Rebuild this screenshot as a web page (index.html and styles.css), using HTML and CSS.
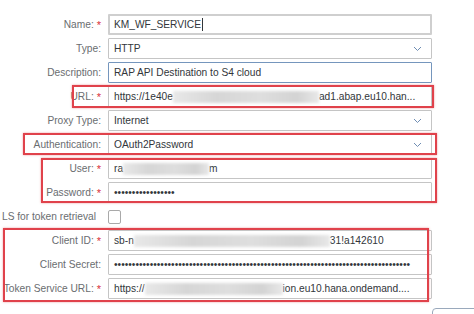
FILE: index.html
```html
<!DOCTYPE html>
<html lang="en">
<head>
    <meta charset="UTF-8">
    <meta name="viewport" content="width=device-width, initial-scale=1.0">
    <title>Destination Configuration</title>
    <link rel="stylesheet" href="styles.css">
</head>
<body>
    <div class="sheet">
        <form class="form">
            <div class="label">Name:<span class="req">*</span></div>
            <div class="field field-name">KM_WF_SERVICE<span class="caret"></span></div>

            <div class="label">Type:</div>
            <div class="field select">HTTP
                <svg class="chev" width="9" height="6" viewBox="0 0 9 6"><path d="M1 1 L4.5 4.5 L8 1" fill="none" stroke="#6f8db3" stroke-width="1"/></svg>
            </div>

            <div class="label">Description:</div>
            <div class="field field-focus">RAP API Destination to S4 cloud</div>

            <div class="label">URL:<span class="req">*</span></div>
            <div class="field">https://1e40e<span class="blur" style="width: 146px"></span>ad1.abap.eu10.han...</div>

            <div class="label">Proxy Type:</div>
            <div class="field select">Internet
                <svg class="chev" width="9" height="6" viewBox="0 0 9 6"><path d="M1 1 L4.5 4.5 L8 1" fill="none" stroke="#6f8db3" stroke-width="1"/></svg>
            </div>

            <div class="label">Authentication:</div>
            <div class="field select">OAuth2Password
                <svg class="chev" width="9" height="6" viewBox="0 0 9 6"><path d="M1 1 L4.5 4.5 L8 1" fill="none" stroke="#6f8db3" stroke-width="1"/></svg>
            </div>

            <div class="label">User:<span class="req">*</span></div>
            <div class="field">ra<span class="blur" style="width: 86px"></span>m</div>

            <div class="label">Password:<span class="req">*</span></div>
            <div class="field dots">&bull;&bull;&bull;&bull;&bull;&bull;&bull;&bull;&bull;&bull;&bull;&bull;&bull;&bull;&bull;&bull;&bull;</div>

            <div class="label label-check">LS for token retrieval</div>
            <div class="check-cell"><span class="checkbox"></span></div>

            <div class="label">Client ID:<span class="req">*</span></div>
            <div class="field">sb-n<span class="blur" style="width: 196px"></span>31!a142610</div>

            <div class="label">Client Secret:</div>
            <div class="field dots">&bull;&bull;&bull;&bull;&bull;&bull;&bull;&bull;&bull;&bull;&bull;&bull;&bull;&bull;&bull;&bull;&bull;&bull;&bull;&bull;&bull;&bull;&bull;&bull;&bull;&bull;&bull;&bull;&bull;&bull;&bull;&bull;&bull;&bull;&bull;&bull;&bull;&bull;&bull;&bull;&bull;&bull;&bull;&bull;&bull;&bull;&bull;&bull;&bull;&bull;&bull;&bull;&bull;&bull;&bull;&bull;&bull;&bull;&bull;&bull;&bull;&bull;&bull;&bull;&bull;&bull;&bull;&bull;&bull;&bull;&bull;&bull;&bull;&bull;&bull;&bull;&bull;&bull;&bull;&bull;&bull;&bull;&bull;</div>

            <div class="label">Token Service URL:<span class="req">*</span></div>
            <div class="field">https://<span class="blur" style="width: 138px"></span>ion.eu10.hana.ondemand....</div>
        </form>

        <div class="footer">
            <span class="btn"></span>
        </div>

        <!-- annotation boxes drawn on top of the form -->
        <div class="mark mark-url"></div>
        <div class="mark mark-auth"></div>
        <div class="mark mark-user"></div>
        <div class="mark mark-client"></div>
    </div>
</body>
</html>
```

FILE: styles.css
```css
html, body {
    margin: 0;
    padding: 0;
    background: #fff;
    overflow: hidden;
}
.sheet {
    position: relative;
    width: 474px;
    height: 314px;
    overflow: hidden;
    font-family: "Liberation Sans", Arial, sans-serif;
    font-size: 10.2px;
}
.form {
    display: grid;
    grid-template-columns: 101px 324px;
    column-gap: 7px;
    row-gap: 3px;
    grid-auto-rows: 21px;
    padding-top: 14px;
}
.label {
    display: flex;
    justify-content: flex-end;
    align-items: center;
    white-space: nowrap;
    color: #6a6d70;
}
.req {
    color: #d9303a;
    margin-left: 3px;
    font-size: 11px;
}
.label-check {
    padding-right: 5px;
}
.field {
    position: relative;
    display: flex;
    align-items: center;
    box-sizing: border-box;
    height: 21px;
    padding-left: 5px;
    border: 1px solid #c5c5c5;
    border-radius: 1px;
    color: #32363a;
    white-space: nowrap;
    overflow: hidden;
}
.field-name {
    border: 2px solid #cfcfcf;
    padding-left: 4px;
}
.field-focus {
    border-color: #7596bd;
}
.caret {
    display: inline-block;
    width: 1px;
    height: 13px;
    margin-left: 1px;
    background: #32363a;
}
.select .chev {
    position: absolute;
    right: 9px;
    top: 7px;
}
.dots {
    letter-spacing: 0;
}
.blur {
    display: inline-block;
    height: 12px;
    background: linear-gradient(90deg, #e8e8e8, #d6d6d6 30%, #dedede 60%, #d3d3d3 85%, #e8e8e8);
    filter: blur(1.5px);
}
.check-cell {
    display: flex;
    align-items: center;
}
.checkbox {
    display: block;
    width: 11px;
    height: 12px;
    border: 1px solid #a9a9a9;
    border-radius: 2px;
    background: #fff;
}
.footer {
    padding-top: 9px;
    padding-left: 432px;
}
.btn {
    display: block;
    width: 80px;
    height: 20px;
    border: 1px solid #9aa9bc;
    border-radius: 4px;
}
.mark {
    position: absolute;
    border: 2px solid #e0424b;
    box-shadow: 0 0 2px rgba(222, 58, 67, 0.5);
}
.mark-url {
    left: 72px;
    top: 85px;
    width: 358px;
    height: 19px;
}
.mark-auth {
    left: 23px;
    top: 133px;
    width: 410px;
    height: 18px;
}
.mark-user {
    left: 41px;
    top: 158px;
    width: 392px;
    height: 41px;
}
.mark-client {
    left: 3px;
    top: 228px;
    width: 422px;
    height: 70px;
}
```
